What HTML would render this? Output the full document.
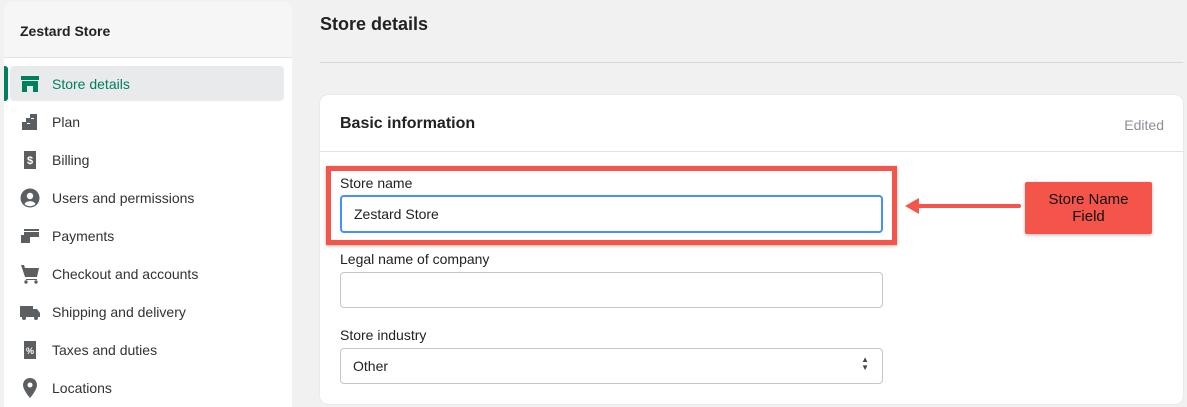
<!DOCTYPE html><html><head><style>
html,body{margin:0;width:1187px;height:407px;overflow:hidden}
body{background:#f1f1f1;font-family:"Liberation Sans",sans-serif;position:relative;color:#202223}
.a{position:absolute}
.side{left:4px;top:2px;width:288px;height:420px;background:#fff;border-radius:8px;overflow:hidden}
.sh{background:#f6f6f7;border-bottom:1px solid #e1e3e5;font-size:14px;font-weight:bold;padding:21px 0 0 16px;box-sizing:border-box;height:56px}
.it{position:absolute;left:6px;width:274px;height:35px;font-size:14px;color:#303234}
.it span{position:absolute;left:42px;top:10px}
.it svg{position:absolute;left:10px;top:8px}
.card{left:320px;top:95px;width:863px;height:309px;background:#fff;border-radius:8px;box-shadow:0 0 1px rgba(0,0,0,.2)}
.lbl{font-size:14px}
.inp{border:1px solid #c4c6c9;border-radius:4px;background:#fff;box-sizing:border-box}
</style></head><body>
<div class="a side">
<div class="sh">Zestard Store</div>
<div class="a" style="left:0;top:64px;width:4px;height:35px;background:#008060;border-radius:0 3px 3px 0"></div>
<div class="it" style="top:64px;background:#e9eaec;border-radius:4px;color:#007f5f"><svg width="20" height="20" viewBox="0 0 20 20"><path fill="#007f5f" d="M1 2h18v4H1z M2 7h16v11h-5v-6H7v6H2z"/></svg><span>Store details</span></div>
<div class="it" style="top:102px"><svg width="20" height="20" viewBox="0 0 20 20"><path fill="#5c5f62" d="M10 2h7v16H2v-8h4V6h4z"/><path fill="#fff" d="M7 11h3v1H7zM11 6h3v1h-3z"/></svg><span>Plan</span></div>
<div class="it" style="top:140px"><svg width="20" height="20" viewBox="0 0 20 20"><path fill="#5c5f62" d="M4 1h12v18H4z"/><text x="10" y="14" font-size="11" fill="#fff" text-anchor="middle" font-weight="bold">$</text></svg><span>Billing</span></div>
<div class="it" style="top:178px"><svg width="20" height="20" viewBox="0 0 20 20"><circle cx="10" cy="10" r="9.5" fill="#5c5f62"/><circle cx="10" cy="8" r="3.2" fill="#fff"/><path d="M4.5 16a6 4.5 0 0 1 11 0a8 8 0 0 1-11 0z" fill="#fff"/></svg><span>Users and permissions</span></div>
<div class="it" style="top:216px"><svg width="20" height="20" viewBox="0 0 20 20"><path fill="#5c5f62" d="M4 3h15v2H4z M4 6h15v5h-9v6H1V9h3z"/></svg><span>Payments</span></div>
<div class="it" style="top:254px"><svg width="20" height="20" viewBox="0 0 20 20"><path fill="#5c5f62" d="M1 1h3l1 3h14l-2 9H5zM6 15h11v1H6z"/><circle cx="6" cy="18" r="1.7" fill="#5c5f62"/><circle cx="16" cy="18" r="1.7" fill="#5c5f62"/></svg><span>Checkout and accounts</span></div>
<div class="it" style="top:292px"><svg width="20" height="20" viewBox="0 0 20 20"><path fill="#5c5f62" d="M0 4h13v11H0zM13 7h4l3 4v4h-7z"/><circle cx="4" cy="16" r="2" fill="#5c5f62"/><circle cx="16" cy="16" r="2" fill="#5c5f62"/></svg><span>Shipping and delivery</span></div>
<div class="it" style="top:330px"><svg width="20" height="20" viewBox="0 0 20 20"><path fill="#5c5f62" d="M4 1h12v18H4z"/><text x="10" y="14" font-size="9" fill="#fff" text-anchor="middle" font-weight="bold">%</text></svg><span>Taxes and duties</span></div>
<div class="it" style="top:368px"><svg width="20" height="20" viewBox="0 0 20 20"><path fill="#5c5f62" d="M10 0a7 7 0 0 1 7 7c0 5-7 13-7 13S3 12 3 7a7 7 0 0 1 7-7z"/><circle cx="10" cy="7" r="2.5" fill="#fff"/></svg><span>Locations</span></div>
</div>
<div class="a" style="left:320px;top:14px;font-size:18px;font-weight:bold">Store details</div>
<div class="a" style="left:320px;top:62px;width:863px;height:1px;background:#d6d7d9"></div>
<div class="a card">
<div class="a" style="left:20px;top:20px;font-size:16px;font-weight:bold">Basic information</div>
<div class="a" style="right:19px;top:22px;font-size:14px;color:#8c9196">Edited</div>
<div class="a" style="left:0;top:56px;width:863px;height:1px;background:#e1e3e5"></div>
<div class="a lbl" style="left:20px;top:80px">Store name</div>
<div class="a inp" style="left:20px;top:100px;width:543px;height:38px;border:2px solid #458fff;padding:9px 12px;font-size:14px">Zestard Store</div>
<div class="a lbl" style="left:20px;top:156px">Legal name of company</div>
<div class="a inp" style="left:20px;top:177px;width:543px;height:36px"></div>
<div class="a lbl" style="left:20px;top:232px">Store industry</div>
<div class="a inp" style="left:20px;top:253px;width:543px;height:36px;padding:9px 12px;font-size:14px">Other<span style="position:absolute;right:13px;top:7px;font-size:8px;line-height:8px;color:#444">▲<br>▼</span></div>
</div>
<div class="a" style="left:326px;top:166px;width:571px;height:79px;border:5px solid #f5544a;box-sizing:border-box;box-shadow:0 1px 3px rgba(0,0,0,.3)"></div>
<svg class="a" style="left:903px;top:198px" width="118" height="18"><path d="M16 8h100" stroke="#f5544a" stroke-width="4" stroke-linecap="round"/><path d="M2 8l14-8v16z" fill="#f5544a"/></svg>
<div class="a" style="left:1025px;top:182px;width:127px;height:52px;background:#f5544a;border-radius:2px;box-shadow:0 1px 3px rgba(0,0,0,.3);font-size:15px;text-align:center;line-height:17px;box-sizing:border-box;padding-top:9px;color:#111">Store Name<br>Field</div>
</body></html>
